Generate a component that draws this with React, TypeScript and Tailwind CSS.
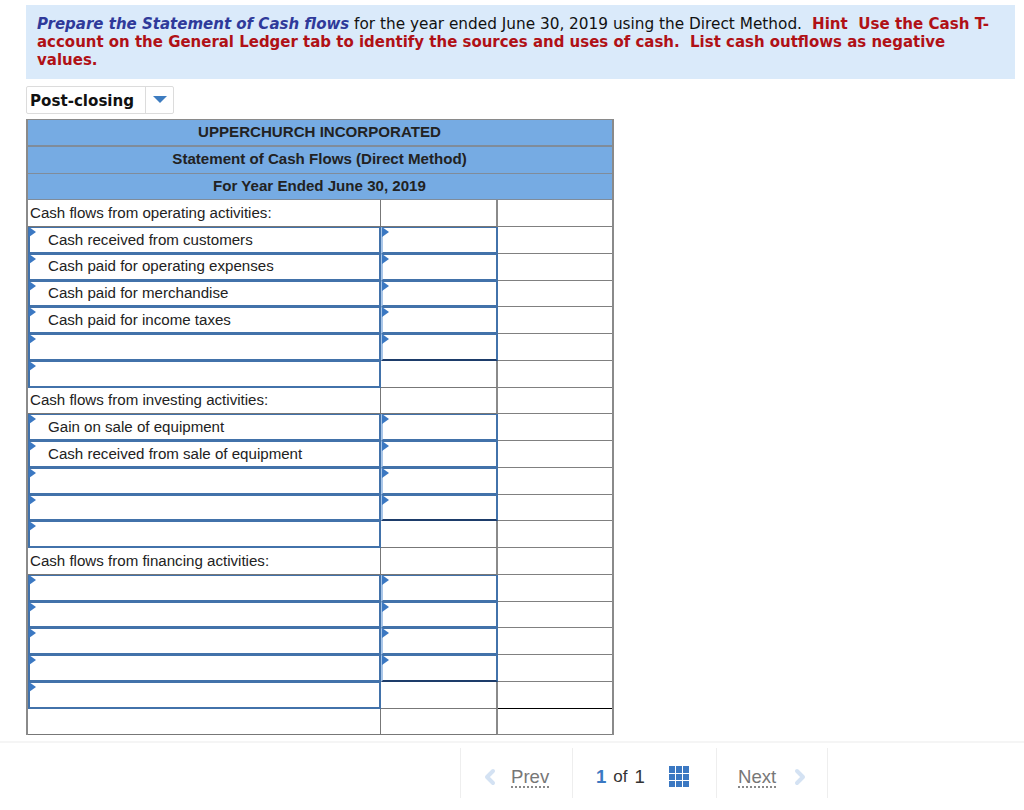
import { ChevronLeft, ChevronRight } from "lucide-react"

type RowKind = "text" | "entry" | "entryLabel" | "blank"

const rows: { kind: RowKind; label?: string }[] = [
  { kind: "text", label: "Cash flows from operating activities:" },
  { kind: "entry", label: "Cash received from customers" },
  { kind: "entry", label: "Cash paid for operating expenses" },
  { kind: "entry", label: "Cash paid for merchandise" },
  { kind: "entry", label: "Cash paid for income taxes" },
  { kind: "entry" },
  { kind: "entryLabel" },
  { kind: "text", label: "Cash flows from investing activities:" },
  { kind: "entry", label: "Gain on sale of equipment" },
  { kind: "entry", label: "Cash received from sale of equipment" },
  { kind: "entry" },
  { kind: "entry" },
  { kind: "entryLabel" },
  { kind: "text", label: "Cash flows from financing activities:" },
  { kind: "entry" },
  { kind: "entry" },
  { kind: "entry" },
  { kind: "entry" },
  { kind: "entryLabel" },
  { kind: "blank" },
]

function Marker() {
  return (
    <svg className="absolute left-[-1px] top-[-1px]" width="7" height="10" viewBox="0 0 7 10">
      <path d="M0 0 L7 5 L0 10 Z" fill="#3b78c2" />
    </svg>
  )
}

function InputCell({ label, className }: { label?: string; className: string }) {
  return (
    <div className={`relative flex h-full items-center border-x-2 border-t border-b-2 border-[#4272aa] pl-[18px] ${className}`}>
      <Marker />
      {label}
    </div>
  )
}

function HeaderRow({ title, thick }: { title: string; thick?: boolean }) {
  return (
    <div
      className={`flex h-[26.75px] items-center justify-center border-[#808c9a] bg-[#76abe3] pr-[1px] text-[15.1px] font-bold text-[#222] ${thick ? "border-b-2" : "border-b"}`}
    >
      {title}
    </div>
  )
}

export default function App() {
  return (
    <div className="h-[810px] w-[1024px] overflow-hidden bg-white font-['Liberation_Sans',Arial,sans-serif]">
      <div className="ml-[26px] mr-[9px] pt-[5px]">
        <div className="h-[74px] bg-[#daeafa] px-[11px] pt-[10px] font-['DejaVu_Sans',Verdana,sans-serif] text-[15px] leading-[18px] text-[#111]">
          <span className="font-bold italic text-[#2f3a9a]">Prepare the Statement of Cash flows</span>
          <span className="text-[15.3px]">{" for the year ended June 30, 2019 using the Direct Method. "}</span>
          <span className="text-[15.1px] font-bold text-[#b01116]">{"\u00a0Hint \u00a0Use the Cash T-"}</span>
          <br />
          <span className="text-[14.97px] font-bold text-[#b01116]">
            {"account on the General Ledger tab to identify the sources and uses of cash. \u00a0List cash outflows as negative"}
          </span>
          <br />
          <span className="font-bold text-[#b01116]">values.</span>
        </div>

        <div className="mt-[7px] flex h-[28px] w-[148px] items-center rounded-[2px] border border-[#dcdcdc] font-['DejaVu_Sans',Verdana,sans-serif] text-[15.1px] font-bold text-[#111]">
          <div className="flex h-full w-[119px] items-center border-r border-[#dcdcdc] pl-[3px] pt-[3px]">Post-closing</div>
          <div className="flex flex-1 justify-center">
            <svg width="14" height="8" viewBox="0 0 14 8">
              <path d="M0 0 H14 L7 7 Z" fill="#3d7cc0" />
            </svg>
          </div>
        </div>

        <div className="mt-[5px] w-[588px] border-x-2 border-t border-[#8a8a8a] text-[15.1px] text-[#222]">
          <HeaderRow title="UPPERCHURCH INCORPORATED" thick />
          <HeaderRow title="Statement of Cash Flows (Direct Method)" />
          <HeaderRow title="For Year Ended June 30, 2019" />
          {rows.map((row, i) => (
            <div key={i} className="grid h-[26.75px] grid-cols-[353px_117px_1fr]">
              {row.kind === "text" && (
                <div className="flex items-center border-r border-b border-[#777] pl-[2px]">{row.label}</div>
              )}
              {row.kind === "blank" && <div className="border-r border-b border-[#777]" />}
              {(row.kind === "entry" || row.kind === "entryLabel") && (
                <InputCell label={row.label} className="" />
              )}
              {row.kind === "entry" ? (
                <InputCell
                  className={`border-l-[#a9c6e8] ${rows[i + 1]?.kind === "entryLabel" ? "border-b-[#1d3c6a]" : ""}`}
                />
              ) : (
                <div className="border-r-2 border-b border-[#8a8a8a] border-b-[#777]" />
              )}
              <div className={`border-b ${i === 18 ? "border-black" : "border-[#808080]"}`} />
            </div>
          ))}
        </div>
      </div>

      <div className="mt-[6px] h-[2px] bg-[#f5f5f5]" />
      <div className="ml-[460px] mt-[5px] flex h-[50px] w-[368px] text-[18.6px]">
        <div className="flex w-[113px] items-center border-x border-[#eeeeee] pl-[17px] pt-[7px]">
          <ChevronLeft size={24} strokeWidth={4} className="text-[#d4e2f3]" />
          <span className="ml-[9px] mt-[2px] border-b-2 border-dotted border-[#888] leading-[18px] text-[#777]">Prev</span>
        </div>
        <div className="flex w-[143px] items-center pl-[23px] pt-[7px]">
          <span className="font-bold text-[#3b78c2]">1</span>
          <span className="ml-[7px] text-[17px] text-[#333]">of</span>
          <span className="ml-[7px] text-[#333]">1</span>
          <div className="ml-[24px] grid grid-cols-3 gap-[1px]">
            {Array.from({ length: 9 }).map((_, i) => (
              <div key={i} className="h-[6.33px] w-[6px] bg-[#3b78c2]" />
            ))}
          </div>
        </div>
        <div className="flex flex-1 items-center border-x border-[#eeeeee] pl-[21px] pt-[7px]">
          <span className="mt-[2px] border-b-2 border-dotted border-[#888] leading-[18px] text-[#777]">Next</span>
          <ChevronRight size={24} strokeWidth={4} className="ml-[12px] text-[#d4e2f3]" />
        </div>
      </div>
    </div>
  )
}
